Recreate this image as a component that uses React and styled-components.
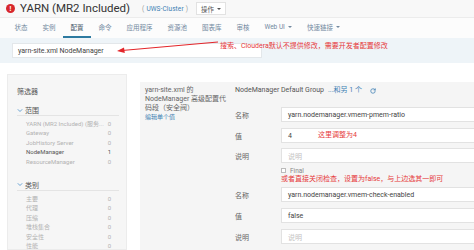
import React from 'react';
import styled, { createGlobalStyle } from 'styled-components';
import { RotateCw } from 'lucide-react';

const GlobalStyle = createGlobalStyle`
  html, body {
    margin: 0;
    padding: 0;
    background: #ffffff;
    width: 474px;
    height: 250px;
    overflow: hidden;
  }
  body {
    font-family: Roboto, "Noto Sans CJK SC", sans-serif;
    color: #444;
  }
  * { box-sizing: border-box; }
`;

const Page = styled.div`
  width: 474px;
  height: 250px;
  overflow: hidden;
`;

// --- header ---
const Header = styled.div`
  height: 17px;
  display: flex;
  align-items: center;
  padding-left: 6px;
  background: #f8f8f8;
`;

const AlertDot = styled.span`
  width: 9px;
  height: 9px;
  border-radius: 50%;
  background: #d7262b;
  color: #fff;
  font-size: 7px;
  font-weight: 700;
  line-height: 9px;
  text-align: center;
  font-family: "Liberation Sans", sans-serif;
`;

const Title = styled.h1`
  margin: 0 0 0 5px;
  font-size: 11.5px;
  font-weight: 400;
  color: #333;
  line-height: 1;
`;

const Cluster = styled.span`
  margin-left: 12px;
  font-size: 6.5px;
  color: #999;
  letter-spacing: 0.1px;

  b {
    font-weight: 400;
    color: #3d7fb3;
    margin: 0 2px;
  }
`;

const ActionButton = styled.span`
  margin-left: 8px;
  height: 13px;
  padding: 0 4px;
  display: flex;
  align-items: center;
  gap: 3px;
  border: 1px solid #e2e2e2;
  background: #fff;
  font-size: 6.5px;
  color: #555;
`;

const Caret = styled.span`
  width: 0;
  height: 0;
  border-left: 2px solid transparent;
  border-right: 2px solid transparent;
  border-top: 2.5px solid ${p => p.$color || '#555'};
`;

// --- nav tabs ---
const Nav = styled.div`
  height: 21px;
  display: flex;
  padding-left: 7px;
  background: #fcfcfc;
  border-top: 1px solid #ececec;
`;

const Tab = styled.div`
  padding: 0 7.5px;
  display: flex;
  align-items: center;
  gap: 3px;
  font-size: 6.5px;
  color: ${p => (p.$active ? '#445566' : '#7289a0')};
  border-bottom: 2px solid ${p => (p.$active ? '#2d7aa0' : 'transparent')};
`;

// --- search strip ---
const SearchStrip = styled.div`
  position: relative;
  height: 25px;
  background: #eef4f8;
  padding: 5px 0 0 12px;
  display: flex;
  align-items: flex-start;
`;

const SearchInput = styled.div`
  width: 250px;
  height: 15px;
  background: #fff;
  border: 1px solid #e3e7ea;
  padding-left: 5px;
  display: flex;
  align-items: center;
  font-size: 7px;
  color: #444;
`;

const Note = styled.span`
  font-size: 7px;
  line-height: 9px;
  color: #e6393a;
  white-space: nowrap;
`;

const SearchNote = styled(Note)`
  position: absolute;
  left: 220px;
  top: 4px;
`;

const Arrow = styled.svg`
  position: absolute;
  left: 110px;
  top: 3px;
`;

// --- body ---
const Body = styled.div`
  display: flex;
  align-items: flex-start;
  padding: 11px 0 0 7px;
`;

const Sidebar = styled.div`
  width: 120px;
  height: 176px;
  background: #f6f6f6;
  border: 1px solid #ececec;
  padding: 11px 7px 0 9px;
`;

const SidebarTitle = styled.div`
  font-size: 7px;
  color: #555;
  height: 11px;
`;

const Group = styled.div`
  margin-top: ${p => p.$top ?? 8}px;
`;

const GroupHead = styled.div`
  display: flex;
  align-items: center;
  gap: 2px;
  height: 11px;
  font-size: 7px;
  color: #555;
  border-bottom: 1px solid #e4e4e4;
  margin-bottom: 3px;
`;

const FilterRow = styled.div`
  display: flex;
  justify-content: space-between;
  padding: 0 8px 0 9px;
  height: 9.4px;
  line-height: 9.4px;
  font-size: 6px;
  color: ${p => (p.$on ? '#555' : '#b2b2b2')};
`;

const Main = styled.div`
  flex: 1;
  margin: 8px 0 0 13px;
  height: 168px;
  background: #f5f5f5;
  display: flex;
  padding: 4px 0 0 5px;
`;

const PropName = styled.div`
  width: 90px;
  font-size: 7px;
  line-height: 9px;
  color: #666;
  padding-right: 8px;
`;

const EditLink = styled.div`
  color: #3d7fb3;
  font-size: 6px;
  line-height: 8px;
`;

const Values = styled.div`
  flex: 1;
`;

const GroupLine = styled.div`
  font-size: 7px;
  color: #555;
  height: 13px;
  line-height: 9px;
  display: flex;
  align-items: flex-start;
  gap: 4px;

  a {
    color: #3d7fb3;
    display: flex;
    align-items: center;
    gap: 8px;
  }
`;

const FieldRow = styled.div`
  display: flex;
  align-items: center;
  margin-top: ${p => p.$top ?? 6}px;
`;

const Label = styled.div`
  width: 46px;
  font-size: 7px;
  color: #666;
`;

const Field = styled.div`
  flex: 1;
  height: 15px;
  background: #fff;
  border: 1px solid #e2e2e2;
  border-right: none;
  padding-left: 6px;
  display: flex;
  align-items: center;
  gap: 26px;
  font-size: 7px;
  color: ${p => (p.$placeholder ? '#c2c2c2' : '#444')};
  white-space: nowrap;
`;

const FinalBlock = styled.div`
  margin: 3px 0 0 46px;
  display: flex;
  flex-direction: column;
`;

const FinalLine = styled.div`
  display: flex;
  align-items: center;
  gap: 4px;
  font-size: 6.5px;
  color: #888;
  height: 9px;
`;

const Box = styled.span`
  width: 5px;
  height: 5px;
  border: 1px solid #bbb;
  background: #fff;
`;

const Chevron = () => (
  <svg width="6" height="5" viewBox="0 0 6 5">
    <path d="M0.8 1.3 L3 3.5 L5.2 1.3" fill="none" stroke="#5a9bd0" strokeWidth="0.9" />
  </svg>
);

const roles = [
  ['YARN (MR2 Included) (服务...', 0],
  ['Gateway', 0],
  ['JobHistory Server', 0],
  ['NodeManager', 1, true],
  ['ResourceManager', 0],
];

const categories = ['主要', '代理', '压缩', '堆栈集合', '安全性', '性能'];

const tabs = ['状态', '实例', '配置', '命令', '应用程序', '资源池', '图表库', '审核'];

export default function App() {
  return (
    <Page>
      <GlobalStyle />
      <Header>
        <AlertDot>!</AlertDot>
        <Title>YARN (MR2 Included)</Title>
        <Cluster>(<b>UWS-Cluster</b>)</Cluster>
        <ActionButton>操作 <Caret /></ActionButton>
      </Header>

      <Nav>
        {tabs.map(t => (
          <Tab key={t} $active={t === '配置'}>{t}</Tab>
        ))}
        <Tab>Web UI <Caret $color="#7289a0" /></Tab>
        <Tab>快速链接 <Caret $color="#7289a0" /></Tab>
      </Nav>

      <SearchStrip>
        <SearchInput>yarn-site.xml NodeManager</SearchInput>
        <Arrow width="110" height="14" viewBox="0 0 110 14">
          <line x1="108" y1="1" x2="12" y2="9.5" stroke="#e3262b" strokeWidth="1.2" />
          <path d="M7 10 L14 6.5 L14.8 12 Z" fill="#e3262b" />
        </Arrow>
        <SearchNote>搜索、Cloudera默认不提供修改，需要开发者配置修改</SearchNote>
      </SearchStrip>

      <Body>
        <Sidebar>
          <SidebarTitle>筛选器</SidebarTitle>
          <Group>
            <GroupHead><Chevron />范围</GroupHead>
            {roles.map(([name, n, on]) => (
              <FilterRow key={name} $on={on}>
                <span>{name}</span>
                <span>{n}</span>
              </FilterRow>
            ))}
          </Group>
          <Group $top={14}>
            <GroupHead><Chevron />类别</GroupHead>
            {categories.map(c => (
              <FilterRow key={c}>
                <span>{c}</span>
                <span>0</span>
              </FilterRow>
            ))}
          </Group>
        </Sidebar>

        <Main>
          <PropName>
            yarn-site.xml 的 NodeManager 高级配置代码段（安全阀）
            <EditLink>编辑单个值</EditLink>
          </PropName>
          <Values>
            <GroupLine>
              NodeManager Default Group
              <a>...和另 1 个 <RotateCw size={6} strokeWidth={3} /></a>
            </GroupLine>
            <FieldRow $top={8}>
              <Label>名称</Label>
              <Field>yarn.nodemanager.vmem-pmem-ratio</Field>
            </FieldRow>
            <FieldRow>
              <Label>值</Label>
              <Field>4 <Note>这里调整为4</Note></Field>
            </FieldRow>
            <FieldRow $top={5}>
              <Label>说明</Label>
              <Field $placeholder>说明</Field>
            </FieldRow>
            <FinalBlock>
              <FinalLine><Box />Final</FinalLine>
              <Note>或者直接关闭检查，设置为false，与上边选其一即可</Note>
            </FinalBlock>
            <FieldRow $top={3}>
              <Label>名称</Label>
              <Field>yarn.nodemanager.vmem-check-enabled</Field>
            </FieldRow>
            <FieldRow>
              <Label>值</Label>
              <Field>false</Field>
            </FieldRow>
            <FieldRow>
              <Label>说明</Label>
              <Field $placeholder>说明</Field>
            </FieldRow>
          </Values>
        </Main>
      </Body>
    </Page>
  );
}
